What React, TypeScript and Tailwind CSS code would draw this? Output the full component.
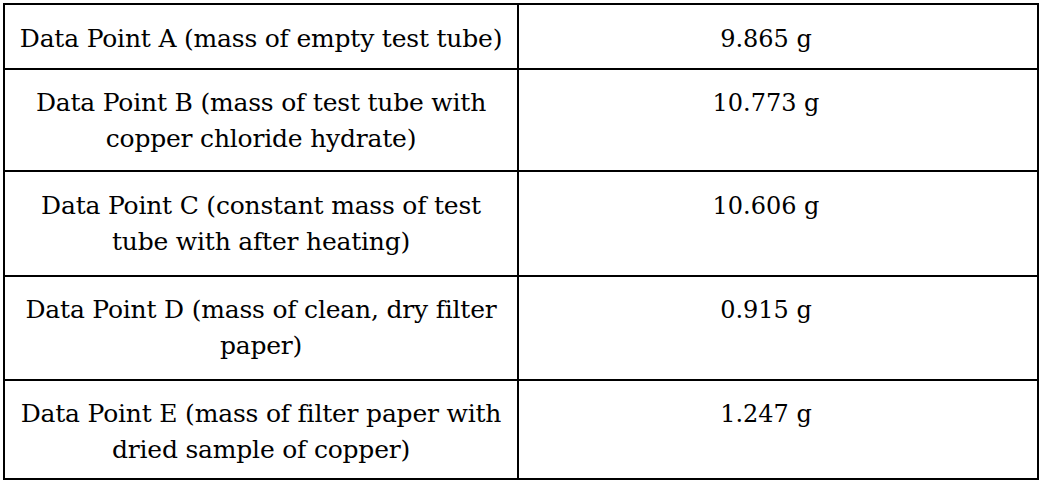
const rows = [
  { label: ["Data Point A (mass of empty test tube)"], value: "9.865 g", h: "h-[63px]", pt: "pt-[16px]" },
  { label: ["Data Point B (mass of test tube with", "copper chloride hydrate)"], value: "10.773 g", h: "h-[102px]", pt: "pt-[15px]" },
  { label: ["Data Point C (constant mass of test", "tube with after heating)"], value: "10.606 g", h: "h-[105px]", pt: "pt-[16px]" },
  { label: ["Data Point D (mass of clean, dry filter", "paper)"], value: "0.915 g", h: "h-[104px]", pt: "pt-[15px]" },
  { label: ["Data Point E (mass of filter paper with", "dried sample of copper)"], value: "1.247 g", h: "h-[99px]", pt: "pt-[15px]" },
];

export default function App() {
  return (
    <div className="w-[1040px] h-[482px] bg-white pt-[3px] pl-[3px] font-['DejaVu_Serif',serif] text-black">
      <div className="w-[1036px] border-2 border-black">
        {rows.map((row, i) => (
          <div
            key={i}
            className={`grid grid-cols-[514px_1fr] ${row.h} ${i > 0 ? "border-t-2 border-black" : ""}`}
          >
            <div className={`border-r-2 border-black px-[6px] ${row.pt} text-center text-[25px] leading-[36px] whitespace-nowrap tracking-[-0.2px]`}>
              {row.label.map((line, j) => (
                <div key={j}>{line}</div>
              ))}
            </div>
            <div className={`pl-[8px] pr-[32px] ${row.pt} text-center text-[24px] leading-[36px]`}>
              {row.value}
            </div>
          </div>
        ))}
      </div>
    </div>
  );
}
